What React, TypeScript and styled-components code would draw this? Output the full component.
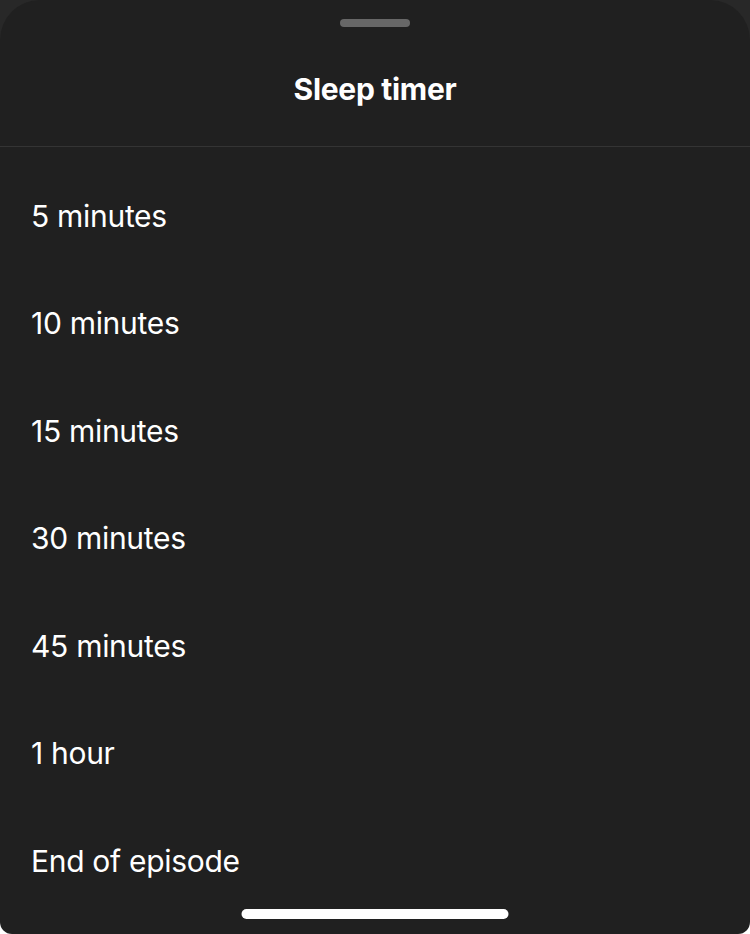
import React from "react";
import styled, { createGlobalStyle } from "styled-components";

const GlobalStyle = createGlobalStyle`
  html, body {
    margin: 0;
    padding: 0;
    height: 100%;
    background: linear-gradient(#282828 0, #282828 50%, #ffffff 50%, #ffffff 100%);
  }
  #root {
    height: 100%;
  }
`;

const Sheet = styled.div`
  position: relative;
  height: 934px;
  box-sizing: border-box;
  background: #202020;
  border-radius: 40px 40px 12px 12px;
  display: flex;
  flex-direction: column;
  font-family: Inter, "Noto Sans", sans-serif;
  color: #ffffff;
  overflow: hidden;
`;

const Header = styled.div`
  flex-shrink: 0;
  height: 147px;
  box-sizing: border-box;
  border-bottom: 1px solid #343434;
  display: flex;
  flex-direction: column;
  align-items: center;
  padding-top: 19px;
`;

const Grabber = styled.div`
  width: 70px;
  height: 8px;
  border-radius: 4px;
  background: #676767;
`;

const Title = styled.h1`
  margin: 44px 0 0;
  font-size: 30px;
  font-weight: 700;
  letter-spacing: -0.3px;
  line-height: 36px;
`;

const List = styled.ul`
  list-style: none;
  margin: 0;
  padding: 15px 0 0;
`;

const Option = styled.li`
  height: 107.5px;
  display: flex;
  align-items: center;
  padding-left: 31px;
  font-size: 30px;
  font-weight: 400;
  letter-spacing: -0.3px;
`;

const HomeIndicator = styled.div`
  position: absolute;
  left: 50%;
  bottom: 15px;
  transform: translateX(-50%);
  width: 267px;
  height: 10px;
  border-radius: 5px;
  background: #ffffff;
`;

const options = [
  "5 minutes",
  "10 minutes",
  "15 minutes",
  "30 minutes",
  "45 minutes",
  "1 hour",
  "End of episode",
];

export default function App() {
  return (
    <>
      <GlobalStyle />
      <Sheet>
        <Header>
          <Grabber />
          <Title>Sleep timer</Title>
        </Header>
        <List>
          {options.map((o) => (
            <Option key={o}>{o}</Option>
          ))}
        </List>
        <HomeIndicator />
      </Sheet>
    </>
  );
}
